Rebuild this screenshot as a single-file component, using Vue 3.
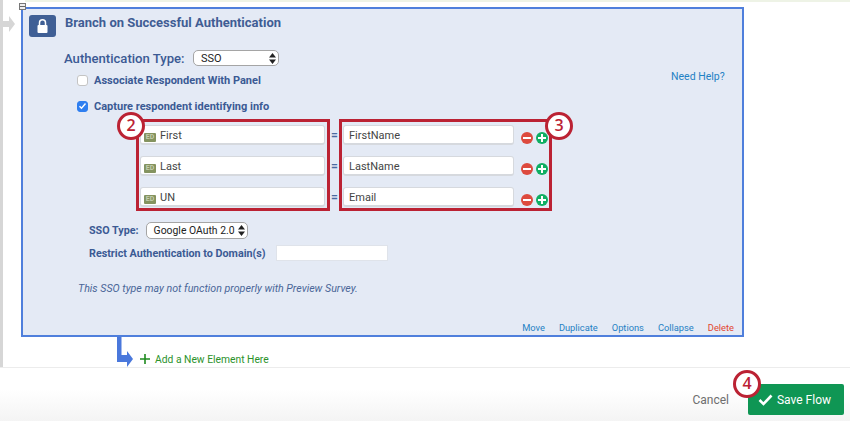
<script setup>
const leftRows = ['First', 'Last', 'UN']
const rightRows = ['FirstName', 'LastName', 'Email']
const actions = ['Move', 'Duplicate', 'Options', 'Collapse']
</script>

<template>
  <div class="page">
    <main class="canvas">
      <span class="top-line"></span>
      <svg class="in-arrow" width="13" height="16" viewBox="0 0 13 16">
        <path d="M0 5h6V0l6 8-6 8v-5H0z" fill="#d6d6d6" />
      </svg>
      <section class="panel">
        <span class="collapse-box"></span>
        <header class="head">
          <div class="lock">
            <svg width="11" height="14" viewBox="0 0 11 14">
              <path d="M2.500 7V3.800a3 3 0 0 1 6 0V7" fill="none" stroke="#fff" stroke-width="1.500" />
              <rect x="0.500" y="6" width="10" height="8" rx="1" fill="#fff" />
            </svg>
          </div>
          <h1 class="title">Branch on Successful Authentication</h1>
        </header>

        <div class="auth-row">
          <span class="auth-label">Authentication Type:</span>
          <div class="select auth-select">
            <span>SSO</span>
            <svg width="7" height="11" viewBox="0 0 7 11"><path d="M3.500 0 7 4.500H0zM3.500 11 0 6.500h7z" fill="#222" /></svg>
          </div>
        </div>

        <div class="check-row first-check">
          <span class="check"></span>
          <span class="check-label">Associate Respondent With Panel</span>
          <a class="help">Need Help?</a>
        </div>
        <div class="check-row second-check">
          <span class="check on">
            <svg width="9" height="8" viewBox="0 0 9 8"><path d="M1.500 4.200 3.500 6.300 7.500 1.500" fill="none" stroke="#fff" stroke-width="1.400" /></svg>
          </span>
          <span class="check-label">Capture respondent identifying info</span>
        </div>

        <div class="mapping">
          <div class="frame left-frame">
            <span class="badge badge-left">2</span>
            <div v-for="row in leftRows" :key="row" class="field">
              <span class="ed">ED</span>
              <span>{{ row }}</span>
            </div>
          </div>
          <div class="equals">
            <span v-for="row in leftRows" :key="row">=</span>
          </div>
          <div class="frame right-frame">
            <span class="badge badge-right">3</span>
            <div v-for="row in rightRows" :key="row" class="right-row">
              <div class="field plain">{{ row }}</div>
              <span class="round minus">
                <svg width="8" height="8" viewBox="0 0 8 8"><path d="M0 4h8" stroke="#fff" stroke-width="2" /></svg>
              </span>
              <span class="round plus">
                <svg width="8" height="8" viewBox="0 0 8 8"><path d="M0 4h8M4 0v8" stroke="#fff" stroke-width="2" /></svg>
              </span>
            </div>
          </div>
        </div>

        <div class="sso-row">
          <span class="form-label">SSO Type:</span>
          <div class="select sso-select">
            <span>Google OAuth 2.0</span>
            <svg width="7" height="11" viewBox="0 0 7 11"><path d="M3.500 0 7 4.500H0zM3.500 11 0 6.500h7z" fill="#222" /></svg>
          </div>
        </div>
        <div class="domain-row">
          <span class="form-label">Restrict Authentication to Domain(s)</span>
          <div class="domain-input"></div>
        </div>
        <p class="note">This SSO type may not function properly with Preview Survey.</p>

        <nav class="actions">
          <a v-for="item in actions" :key="item">{{ item }}</a>
          <a class="danger">Delete</a>
        </nav>
      </section>

      <div class="add-row">
        <svg class="elbow" width="18" height="31" viewBox="0 0 18 31">
          <path d="M1 0h4.500v18H11v-4l6 8-6 8v-5H1z" fill="#4a78dc" />
        </svg>
        <svg width="10" height="10" viewBox="0 0 10 10"><path d="M0 5h10M5 0v10" stroke="#1f8a1f" stroke-width="1.600" /></svg>
        <span class="add-text">Add a New Element Here</span>
      </div>
    </main>

    <footer class="footer">
      <a class="cancel">Cancel</a>
      <button class="save">
        <span class="badge badge-save">4</span>
        <svg width="15" height="12" viewBox="0 0 15 12"><path d="M1.500 6 5.500 10 13.500 1.500" fill="none" stroke="#fff" stroke-width="2.600" /></svg>
        <span>Save Flow</span>
      </button>
    </footer>
  </div>
</template>

<style>
html, body { margin: 0; background: #fff; overflow: hidden; }
</style>

<style scoped>
.page {
  width: 850px;
  height: 421px;
  display: flex;
  flex-direction: column;
  overflow: hidden;
  font-family: Roboto, "Liberation Sans", sans-serif;
  color: #3b5a94;
}
.canvas {
  position: relative;
  height: 367px;
  flex: none;
  border-left: 3px solid #d6d6d6;
  padding: 7px 0 0 18px;
  box-sizing: border-box;
}
.top-line {
  position: absolute;
  top: 0;
  left: 22px;
  right: 0;
  height: 2px;
  background: #eef3e6;
}
.in-arrow { position: absolute; left: 0; top: 16px; }
.panel {
  position: relative;
  box-sizing: border-box;
  width: 723px;
  height: 330px;
  border: 2px solid #4f7fdc;
  background: #e4eaf5;
  display: flex;
  flex-direction: column;
}
.collapse-box {
  position: absolute;
  left: -4px;
  top: -6px;
  width: 5px;
  height: 5px;
  border: 1px solid #777;
  background: linear-gradient(#eee 2px, #666 2px, #666 3px, #eee 3px);
}
.head { display: flex; padding: 6px 0 0 6px; height: 35px; box-sizing: border-box; }
.lock {
  width: 27px;
  height: 22px;
  border-radius: 3px;
  background: #3f5f95;
  display: flex;
  align-items: center;
  justify-content: center;
}
.title {
  margin: 0 0 0 9px;
  font-size: 13px;
  line-height: 16px;
  font-weight: 700;
  color: #3f5d94;
}
.auth-row { display: flex; align-items: center; margin: 6px 0 0 41px; height: 16px; }
.auth-label { font-size: 13.100px; font-weight: 500; width: 129px; white-space: nowrap; }
.select {
  box-sizing: border-box;
  display: flex;
  align-items: center;
  justify-content: space-between;
  background: #fff;
  border: 1px solid #a5a5a5;
  border-radius: 5px;
  color: #222;
  font-size: 11px;
  white-space: nowrap;
}
.auth-select { width: 86px; height: 16px; padding: 0 2px 0 7px; }
.check-row {
  display: flex;
  align-items: center;
  position: relative;
  margin-left: 54px;
  height: 14px;
}
.first-check { margin-top: 7px; }
.second-check { margin-top: 12px; }
.check {
  width: 11px;
  height: 11px;
  box-sizing: border-box;
  background: #fff;
  border: 1px solid #c4c4c4;
  border-radius: 3px;
  display: flex;
  align-items: center;
  justify-content: center;
}
.check.on { background: #2f7ff0; border-color: #2f7ff0; }
.check-label { margin-left: 6px; font-size: 11px; font-weight: 700; white-space: nowrap; }
.help {
  position: absolute;
  left: 594px;
  top: -3px;
  font-size: 10.500px;
  color: #1f81c4;
  white-space: nowrap;
}
.mapping { display: flex; margin: 6px 0 0 113px; height: 92px; }
.frame {
  position: relative;
  box-sizing: border-box;
  height: 92px;
  border: 3px solid #bb2233;
  display: flex;
  flex-direction: column;
  gap: 11px;
  padding-top: 3px;
}
.left-frame { width: 194px; padding-left: 1px; padding-right: 2px; }
.right-frame { width: 213px; padding-left: 1px; }
.equals {
  width: 9px;
  display: flex;
  flex-direction: column;
  align-items: center;
  gap: 11px;
  padding-top: 6px;
  font-size: 12px;
  font-weight: 700;
  color: #4a6aa0;
}
.equals span { height: 20px; line-height: 20px; }
.field {
  box-sizing: border-box;
  height: 20px;
  background: #fff;
  border: 1px solid #d6d9de;
  border-bottom-width: 2px;
  border-radius: 3px;
  display: flex;
  align-items: center;
  font-size: 11px;
  color: #444;
  padding: 1px 0 0 3px;
}
.field.plain { width: 171px; padding-left: 5px; flex: none; }
.ed {
  width: 12px;
  height: 9px;
  margin: 4px 4px 0 0;
  background: #84935f;
  color: #c3cdae;
  font-size: 7px;
  font-weight: 700;
  line-height: 9px;
  text-align: center;
  border-radius: 1px;
}
.right-row { display: flex; align-items: flex-start; height: 20px; }
.round {
  width: 12px;
  height: 12px;
  border-radius: 50%;
  margin-top: 7px;
  display: flex;
  align-items: center;
  justify-content: center;
}
.minus { background: #dd4a3e; margin-left: 7px; }
.plus { background: #0fae62; margin-left: 3px; }
.badge {
  position: absolute;
  box-sizing: border-box;
  width: 28px;
  height: 28px;
  border: 3px solid #bb2233;
  border-radius: 50%;
  background: #fff;
  color: #bb2233;
  font-family: "Open Sans", "Liberation Sans", sans-serif;
  font-size: 16px;
  font-weight: 600;
  line-height: 21px;
  text-align: center;
}
.badge-left { left: -22px; top: -10px; }
.badge-right { left: 203px; top: -10px; }
.badge-save { left: -15px; top: -14px; }
.sso-row { display: flex; align-items: center; margin: 11px 0 0 66px; height: 17px; }
.form-label { font-size: 10.750px; font-weight: 700; white-space: nowrap; }
.sso-select { margin-left: 7px; width: 102px; height: 17px; padding: 0 2px 0 7px; font-size: 10.400px; }
.domain-row { display: flex; align-items: center; margin: 6px 0 0 66px; height: 16px; }
.domain-input {
  margin-left: 10px;
  width: 112px;
  height: 16px;
  box-sizing: border-box;
  background: #fff;
  border: 1px solid #dfe3ea;
}
.note {
  margin: 20px 0 0 55px;
  font-size: 10.650px;
  line-height: 16px;
  font-style: italic;
  color: #4a6698;
  white-space: nowrap;
}
.actions {
  margin-top: auto;
  height: 14px;
  display: flex;
  justify-content: flex-end;
  gap: 14px;
  padding-right: 8px;
  font-size: 9.300px;
  line-height: 14px;
  color: #1f81c4;
}
.danger { color: #e2452f; }
.add-row {
  position: relative;
  display: flex;
  align-items: center;
  height: 30px;
  box-sizing: border-box;
  padding: 14px 0 0 119px;
  color: #2b922b;
  font-size: 10.300px;
}
.elbow { position: absolute; left: 95px; top: 0; }
.add-text { margin-left: 5px; }
.footer {
  flex: 1;
  box-sizing: border-box;
  border-top: 1px solid #ececec;
  background: linear-gradient(#fff 40%, #f4f4f4);
  display: flex;
  justify-content: flex-end;
  align-items: flex-start;
  padding: 16px 6px 0 0;
}
.cancel { margin: 9px 19px 0 0; font-size: 12px; color: #6e6e6e; line-height: 14px; }
.save {
  position: relative;
  box-sizing: border-box;
  width: 96px;
  height: 31px;
  border: 0;
  border-radius: 2px;
  background: #0f9654;
  color: #fff;
  display: flex;
  align-items: center;
  justify-content: center;
  gap: 4px;
  padding: 0 3px 0 0;
  font-family: Roboto, "Liberation Sans", sans-serif;
  font-size: 12px;
}
</style>
